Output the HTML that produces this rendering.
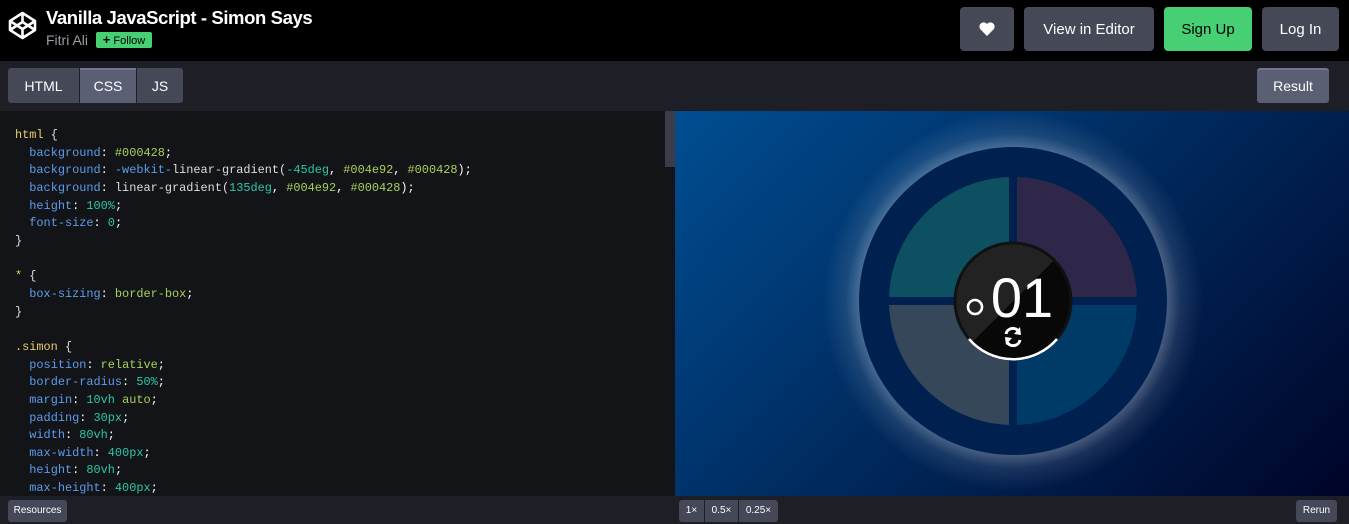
<!DOCTYPE html>
<html><head><meta charset="utf-8"><style>
*{box-sizing:border-box;margin:0;padding:0}
body{width:1349px;height:524px;overflow:hidden;background:#1e1f26;font-family:"Liberation Sans",sans-serif;position:relative}
.hdr{position:absolute;left:0;top:0;width:1349px;height:61px;background:#000}
.title{position:absolute;left:46px;top:7px;color:#fff;font-weight:bold;font-size:18.5px;letter-spacing:-0.4px}
.author{position:absolute;left:46px;top:32px;color:#9a9ca5;font-size:14px}
.follow{position:absolute;left:96px;top:32px;width:56px;height:16px;background:#47cf73;border-radius:2px;color:#000;font-size:11px;line-height:16px;text-align:center}
.btn{position:absolute;top:7px;height:44px;border-radius:4px;background:#444857;color:#fff;font-size:15px;line-height:46px;text-align:center}
.tabs{position:absolute;top:68px;height:35px;background:#444857;color:#fff;font-size:14px;line-height:37px;text-align:center;border-radius:3px}
.code{position:absolute;left:0;top:111px;width:675px;height:385px;background:#131417;overflow:hidden}
pre{position:absolute;left:15px;top:125px;font-family:"Liberation Mono",monospace;font-size:11.9px;line-height:17.65px;color:#fff}
.s{color:#e6cd69}.k{color:#5d9cec}.v{color:#a8d25c}.n{color:#2bc7a8}.p{color:#ddd}
.res{position:absolute;left:675px;top:111px;width:674px;height:385px;background:linear-gradient(135deg,#004e92,#000428);overflow:hidden}
.sb{position:absolute;top:500px;height:22px;background:#444857;color:#fff;font-size:10px;line-height:22px;text-align:center;border-radius:3px}
</style></head><body>
<div class="hdr">
<svg style="position:absolute;left:7px;top:10px" width="31" height="31" viewBox="0 0 31 31" fill="none" stroke="#fff" stroke-width="2.6" stroke-linejoin="round"><path d="M15.5 3 L28 11 L28 20 L15.5 28 L3 20 L3 11 Z M3 11 L15.5 19 L28 11 M3 20 L15.5 12 L28 20 M15.5 3 L15.5 12 M15.5 19 L15.5 28"/></svg>
<div class="title">Vanilla JavaScript - Simon Says</div>
<div class="author">Fitri Ali</div>
<div class="follow"><b style="font-size:13px">+</b> Follow</div>
<div class="btn" style="left:960px;width:54px"><svg width="16" height="14" viewBox="0 0 16 14" style="margin-top:15px"><path d="M8 14 L1.3 7.2 A3.9 3.9 0 0 1 8 2 A3.9 3.9 0 0 1 14.7 7.2 Z" fill="#fff"/></svg></div>
<div class="btn" style="left:1024px;width:130px">View in Editor</div>
<div class="btn" style="left:1164px;width:88px;background:#47cf73;color:#000">Sign Up</div>
<div class="btn" style="left:1262px;width:77px">Log In</div>
</div>
<div class="tabs" style="left:8px;width:71px;border-radius:3px 0 0 3px">HTML</div>
<div class="tabs" style="left:80px;width:56px;background:#5a5f73;border-top:2px solid #717790;line-height:33px;border-radius:0">CSS</div>
<div class="tabs" style="left:137px;width:46px;border-radius:0 3px 3px 0">JS</div>
<div class="tabs" style="left:1257px;width:72px;background:#5a5f73;border-top:2px solid #717790;line-height:33px">Result</div>
<div class="code"><div style="position:absolute;left:665px;top:0;width:10px;height:56px;background:#3a3d48"></div></div>
<pre style="top:127px"><span class="s">html</span> <span class="p">{</span>
  <span class="k">background</span>: <span class="v">#000428</span>;
  <span class="k">background</span>: <span class="k">-webkit-</span><span class="p">linear-gradient(</span><span class="n">-45deg</span>, <span class="v">#004e92</span>, <span class="v">#000428</span>);
  <span class="k">background</span>: <span class="p">linear-gradient(</span><span class="n">135deg</span>, <span class="v">#004e92</span>, <span class="v">#000428</span>);
  <span class="k">height</span>: <span class="n">100%</span>;
  <span class="k">font-size</span>: <span class="n">0</span>;
<span class="p">}</span>

<span class="s">*</span> <span class="p">{</span>
  <span class="k">box-sizing</span>: <span class="v">border-box</span>;
<span class="p">}</span>

<span class="s">.simon</span> <span class="p">{</span>
  <span class="k">position</span>: <span class="v">relative</span>;
  <span class="k">border-radius</span>: <span class="n">50%</span>;
  <span class="k">margin</span>: <span class="n">10vh</span> <span class="v">auto</span>;
  <span class="k">padding</span>: <span class="n">30px</span>;
  <span class="k">width</span>: <span class="n">80vh</span>;
  <span class="k">max-width</span>: <span class="n">400px</span>;
  <span class="k">height</span>: <span class="n">80vh</span>;
  <span class="k">max-height</span>: <span class="n">400px</span>;</pre>
<div class="res">
<svg width="674" height="385" style="position:absolute;left:0;top:0">
<defs><radialGradient id="g"><stop offset="0.8" stop-color="#fff" stop-opacity="0.3"/><stop offset="0.88" stop-color="#fff" stop-opacity="0.1"/><stop offset="1" stop-color="#fff" stop-opacity="0"/></radialGradient>
<linearGradient id="c" x1="0" y1="0" x2="1" y2="1"><stop offset="0.5" stop-color="#222"/><stop offset="0.5" stop-color="#080808"/></linearGradient>
<clipPath id="q"><circle cx="338" cy="190" r="124"/></clipPath></defs>
<circle cx="338" cy="190" r="190" fill="url(#g)"/>
<circle cx="338" cy="190" r="154" fill="#00214f"/>
<g clip-path="url(#q)">
<rect x="210" y="60" width="124" height="126" fill="#0d5061"/>
<rect x="342" y="60" width="124" height="126" fill="#2e2749"/>
<rect x="210" y="194" width="124" height="126" fill="#36475a"/>
<rect x="342" y="194" width="124" height="126" fill="#003a66"/>
</g>
<circle cx="338" cy="190" r="58" fill="url(#c)" stroke="#111" stroke-width="3"/>
<path d="M294 228 A58 58 0 0 0 382 228" fill="none" stroke="#fff" stroke-width="2.5"/>
<circle cx="300" cy="196" r="7" fill="none" stroke="#fff" stroke-width="2.6"/>
<text x="347" y="206" text-anchor="middle" fill="#fff" font-family="Liberation Sans,sans-serif" font-size="56">01</text>
<g fill="none" stroke="#fff" stroke-width="3"><path d="M331 223 A7 7 0 0 1 344 221"/><path d="M345 229 A7 7 0 0 1 332 231"/></g>
<path d="M345 216 L346 224 L339 223 Z M331 234 L330 226 L337 227 Z" fill="#fff"/>
</svg>
</div>
<div class="sb" style="left:8px;width:59px">Resources</div>
<div class="sb" style="left:679px;width:25px;border-radius:3px 0 0 3px">1×</div>
<div class="sb" style="left:705px;width:33px;border-radius:0">0.5×</div>
<div class="sb" style="left:739px;width:39px;border-radius:0 3px 3px 0">0.25×</div>
<div class="sb" style="left:1296px;width:41px">Rerun</div>
</body></html>
